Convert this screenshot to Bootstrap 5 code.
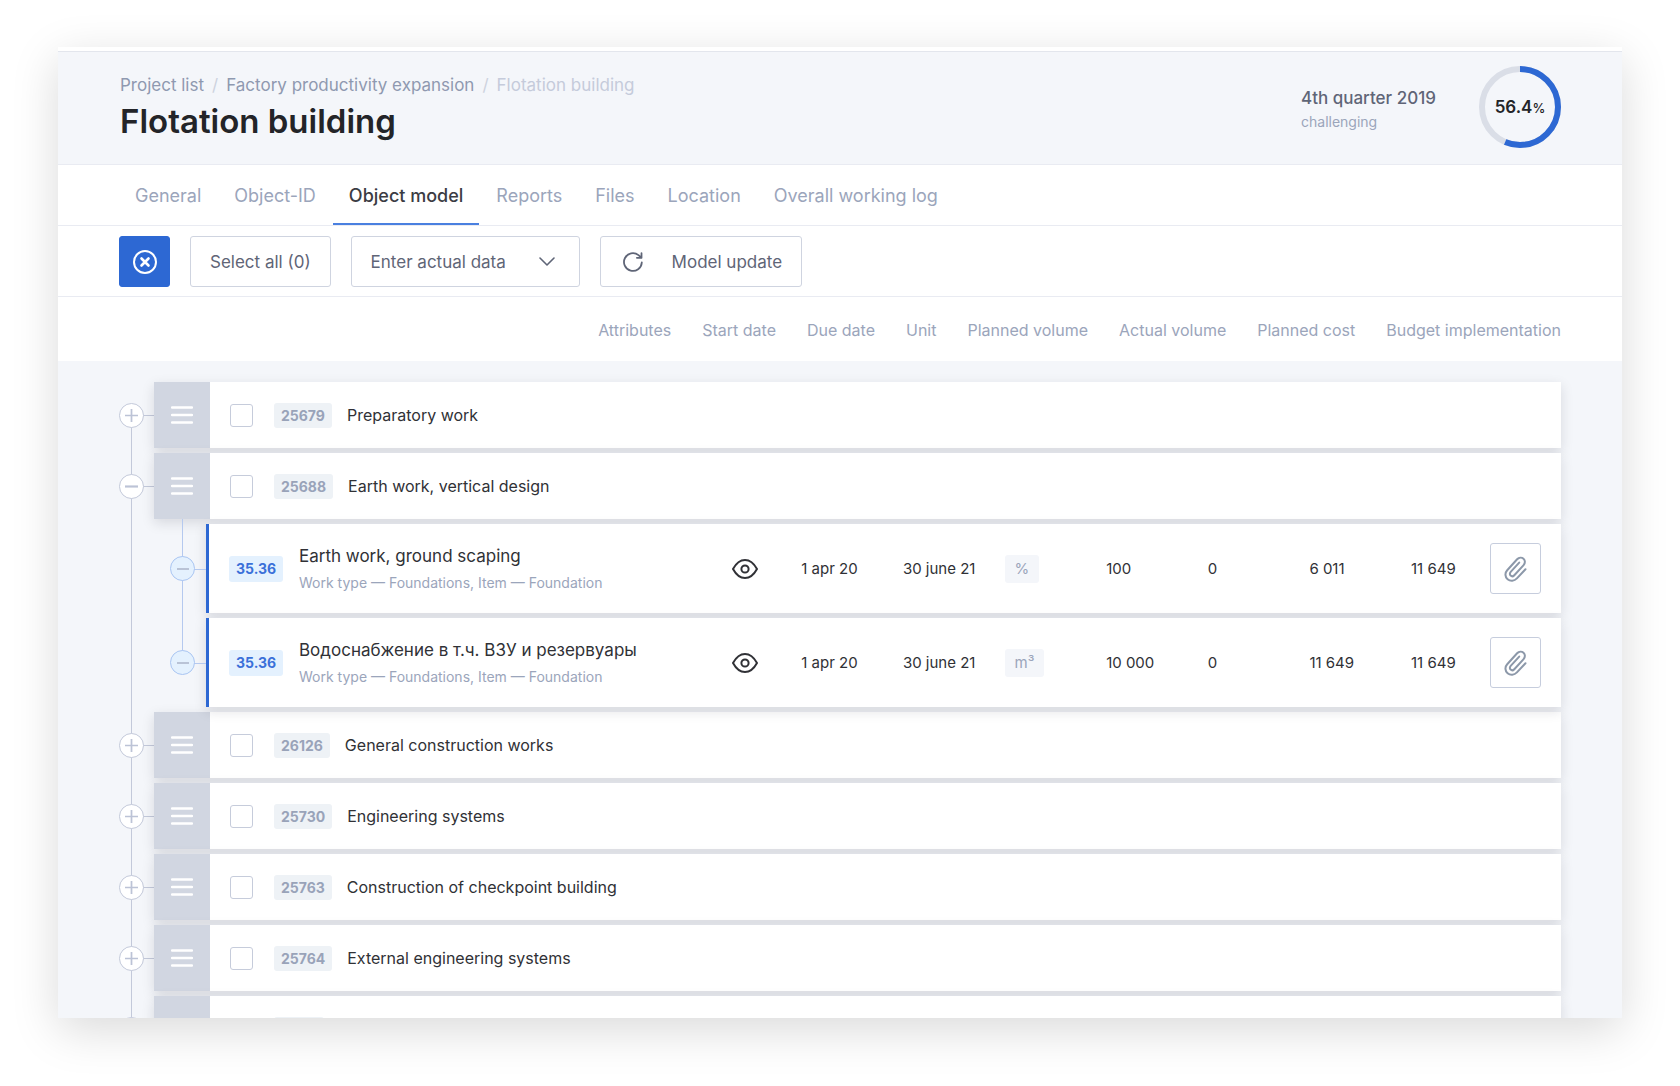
<!DOCTYPE html>
<html lang="en">
<head>
<meta charset="utf-8">
<meta name="viewport" content="width=device-width, initial-scale=1">
<title>Flotation building</title>
<link href="https://cdn.jsdelivr.net/npm/bootstrap@5.3.0/dist/css/bootstrap.min.css" rel="stylesheet">
<style>
  :root {
    --blue: #2d68d3;
    --ink: #303136;
    --slate: #5f6577;
    --muted: #9ba5bb;
    --line: #e9ebf2;
    --edge: #cfd4e0;
    --wash: #f4f6fa;
  }
  body { font-family: Inter, "Liberation Sans", sans-serif; color: var(--ink); background: #fff; font-size: 16px; line-height: 24px; }
  a { text-decoration: none; }
  .stage { height: 100vh; padding: 47px 58px 68px; }
  .app-window { background: #fff; box-shadow: 0 12px 44px rgba(0, 0, 0, .15); padding-top: 4px; }
  .gutter { padding-left: 61px; padding-right: 61px; }

  .page-head { background: var(--wash); border-top: 1px solid #e3e6ed; border-bottom: 1px solid var(--line); padding-top: 21px; padding-bottom: 23px; }
  .headings { padding-left: 1px; }
  .breadcrumb { --bs-breadcrumb-divider-color: #cdd2de; --bs-breadcrumb-item-padding-x: 8px; font-size: 17px; }
  .breadcrumb a { color: #8f99b0; }
  .breadcrumb .active { color: #c5cbdb; }
  .page-title { font-size: 33px; line-height: 40px; font-weight: 600; color: #232428; }
  .due { width: 137px; padding-top: 6px; margin-right: 41px; }
  .due-when { font-size: 17px; font-weight: 500; color: var(--slate); }
  .due-state { font-size: 14px; color: var(--muted); }
  .ring { width: 82px; height: 82px; margin: -20px 0; }
  .ring svg { transform: rotate(-90deg); }
  .ring-value { font-size: 17px; font-weight: 600; color: #232428; }
  .ring-value span { font-size: 13px; font-weight: 500; }

  .tabs { border-bottom: 1px solid var(--line); gap: 1px; }
  .tabs .nav-link { color: var(--muted); font-size: 18px; line-height: 24px; padding: 19px 16px 15px; border-bottom: 2px solid transparent; }
  .tabs .nav-link.active { color: #3b3c43; border-color: #4a80e0; font-weight: 500; }

  .toolbar { border-bottom: 1px solid var(--line); padding-top: 10px; padding-bottom: 9px; gap: 20px; }
  .tool { height: 51px; border: 1px solid var(--edge); border-radius: 3px; font-size: 17px; line-height: 24px; color: var(--slate); padding: 0 19px; background-color: #fff; }
  .tool-square { width: 51px; padding: 0; background: var(--blue); border-color: var(--blue); color: #fff; }
  .tool-select { width: 229px; background-image: url("data:image/svg+xml,%3Csvg xmlns='http://www.w3.org/2000/svg' viewBox='0 0 16 16'%3E%3Cpath fill='none' stroke='%235f6577' stroke-width='1.6' stroke-linecap='round' stroke-linejoin='round' d='M1 4l7 7 7-7'/%3E%3C/svg%3E"); background-size: 16px 16px; background-position: right 24px center; }
  .tool-update { gap: 29px; padding-left: 22px; }

  .col-heads { font-size: 16px; color: var(--muted); gap: 31px; padding-top: 21px; padding-bottom: 19px; }

  .tree-area { background: var(--wash); padding-top: 21px; }
  .tree { gap: 5px; position: relative; }
  .tree::before { content: ""; position: absolute; left: 12px; top: 34px; height: 100vh; width: 1px; background: #c3c9da; }
  .knot { width: 35px; position: relative; }
  .knot::before { content: ""; position: absolute; left: 12px; right: 0; top: 50%; height: 1px; background: #c3c9da; }
  .knob { width: 25px; height: 25px; position: relative; background: #fff; border: 1px solid #c3c9da; border-radius: 50%; color: #bcc3d6; }
  .bar-card { background: #fff; box-shadow: 0 4px 12px rgba(20, 20, 35, .13); height: 66px; position: relative; }
  .grip { width: 56px; background: #d1d6e1; border-radius: 0; margin-right: 20px; }
  .row-check { width: 23px; height: 23px; margin: 0 21px 0 0; border: 1px solid #c6ccdb; }
  .tree .row-check { border-radius: 3px; }
  .code-tag { background: #eef2f6; color: #99a3b9; font-size: 14px; font-weight: 700; line-height: 25px; padding: 0 7px; border-radius: 3px; margin-right: 15px; }
  .row-name { color: var(--ink); font-size: 16px; }

  .branch { padding-left: 35px; position: relative; z-index: 1; }
  .rail { width: 52px; gap: 5px; position: relative; }
  .rail::before { content: ""; position: absolute; left: 28px; top: -5px; height: 143px; width: 1px; background: #b5c9ef; }
  .rail-stop { height: 89px; padding-left: 16px; position: relative; }
  .rail-stop::before { content: ""; position: absolute; left: 28px; right: 0; top: 50%; height: 1px; background: #b5c9ef; }
  .rail-stop .knob { background: #e4f1fe; border-color: #a9c5f2; color: #b9c3d6; }
  .work-table { table-layout: fixed; border-collapse: separate; border-spacing: 0 5px; margin: -5px 0; flex: 1 1 0; width: 1px; font-size: 15px; }
  .work-table tbody tr { box-shadow: 0 4px 12px rgba(20, 20, 35, .13); }
  .work-table td { background: #fff; height: 89px; padding: 0; vertical-align: middle; white-space: nowrap; }
  .work-table td:first-child { border-left: 3px solid var(--blue); padding-left: 20px; }
  .w-code { width: 93px; }
  .w-eye { width: 69px; }
  .w-data { width: 7.5%; }
  .w-budget { width: 79px; }
  .w-clip { width: 71px; }
  .score-tag { background: #e4f1fe; color: #3a70d9; font-size: 14px; font-weight: 700; line-height: 26px; padding: 0 7px; border-radius: 3px; display: inline-block; }
  .work-name { font-size: 17px; line-height: 24px; color: var(--ink); padding-top: 2px; }
  .work-note { font-size: 14px; line-height: 24px; color: var(--muted); padding-top: 3px; }
  .unit-tag { background: var(--wash); color: var(--muted); line-height: 28px; padding: 0 10px; border-radius: 3px; display: inline-block; }
  .clip-btn { width: 51px; height: 51px; border: 1px solid #c6cddd; border-radius: 3px; padding: 0; color: #8c98a9; background: #fff; }
</style>
<script src="https://cdn.jsdelivr.net/npm/bootstrap@5.3.0/dist/js/bootstrap.bundle.min.js"></script>
</head>
<body>
<svg class="d-none" aria-hidden="true">
  <symbol id="plus" viewBox="0 0 12 12"><path d="M0 6h12M6 0v12" stroke="currentColor" stroke-width="1.6"/></symbol>
  <symbol id="minus" viewBox="0 0 12 12"><path d="M0 6h12" stroke="currentColor" stroke-width="2"/></symbol>
  <symbol id="lines" viewBox="0 0 22 18"><path d="M1 1.5h20M1 9h20M1 16.5h20" stroke="#fff" stroke-width="2.4" stroke-linecap="round"/></symbol>
  <symbol id="eye" viewBox="0 0 26 20"><g fill="none" stroke="#303136" stroke-width="2" stroke-linejoin="round"><path d="M1 10C4 4.500 8 1 13 1s9 3.500 12 9c-3 5.500-7 9-12 9S4 15.500 1 10z"/><circle cx="13" cy="10" r="3.600"/></g></symbol>
  <symbol id="clip" viewBox="0.5 0 24 26"><path d="M22 13.200l-8.600 9.200c-2.600 2.800-6.600 3.100-9.300.8s-2.900-6.300-.4-9L13.600 3.300c1.900-2 4.600-2.200 6.400-.6s1.900 4.400.1 6.400l-9.300 10.100c-1.100 1.200-2.700 1.300-3.700.4s-1-2.500.1-3.700l8.500-9.300" fill="none" stroke="currentColor" stroke-width="2" stroke-linecap="round"/></symbol>
</svg>

<div class="stage">
<main class="app-window h-100 overflow-hidden d-flex flex-column">

  <header class="page-head gutter d-flex align-items-center flex-shrink-0">
    <div class="headings me-auto">
      <nav aria-label="Breadcrumb">
        <ol class="breadcrumb mb-1">
          <li class="breadcrumb-item"><a href="#">Project list</a></li>
          <li class="breadcrumb-item"><a href="#">Factory productivity expansion</a></li>
          <li class="breadcrumb-item active" aria-current="page">Flotation building</li>
        </ol>
      </nav>
      <h1 class="page-title mb-0">Flotation building</h1>
    </div>
    <div class="due text-nowrap">
      <div class="due-when">4th quarter 2019</div>
      <div class="due-state">challenging</div>
    </div>
    <div class="ring position-relative d-flex align-items-center justify-content-center">
      <svg class="position-absolute top-0 start-0" width="82" height="82" viewBox="0 0 82 82" fill="none" stroke-width="6" aria-hidden="true">
        <circle cx="41" cy="41" r="38" stroke="#dadee7"/>
        <circle cx="41" cy="41" r="38" stroke="#2d68d3" pathLength="100" stroke-dasharray="56.4 100"/>
      </svg>
      <div class="ring-value position-relative">56.4<span>%</span></div>
    </div>
  </header>

  <nav class="tabs nav gutter flex-shrink-0" aria-label="Sections">
    <a class="nav-link" href="#">General</a>
    <a class="nav-link" href="#">Object-ID</a>
    <a class="nav-link active" aria-current="page" href="#">Object model</a>
    <a class="nav-link" href="#">Reports</a>
    <a class="nav-link" href="#">Files</a>
    <a class="nav-link" href="#">Location</a>
    <a class="nav-link" href="#">Overall working log</a>
  </nav>

  <div class="toolbar gutter d-flex flex-shrink-0">
    <button type="button" class="btn tool tool-square d-flex align-items-center justify-content-center" aria-label="Clear selection">
      <svg width="24" height="24" viewBox="0 0 24 24" fill="none" stroke="currentColor" stroke-linecap="round"><circle cx="12" cy="12" r="11" stroke-width="2"/><path d="M8.500 8.500l7 7M15.500 8.500l-7 7" stroke-width="2.600"/></svg>
    </button>
    <button type="button" class="btn tool">Select all (0)</button>
    <select class="form-select tool tool-select" aria-label="Data entry"><option>Enter actual data</option></select>
    <button type="button" class="btn tool tool-update d-flex align-items-center">
      <svg width="20" height="20" viewBox="0 0 20 20" fill="none" stroke="currentColor" stroke-width="1.800" stroke-linecap="round" stroke-linejoin="round" aria-hidden="true"><path d="M18.800 10.500A8.900 8.900 0 1 1 15.500 3.100L18.500 5.800M18.500 1.200v4.600h-4.600"/></svg>
      Model update
    </button>
  </div>

  <div class="col-heads gutter d-flex justify-content-end text-nowrap flex-shrink-0">
    <span>Attributes</span><span>Start date</span><span>Due date</span><span>Unit</span><span>Planned volume</span><span>Actual volume</span><span>Planned cost</span><span>Budget implementation</span>
  </div>

  <section class="tree-area gutter flex-grow-1 overflow-hidden">
    <div class="tree d-flex flex-column">

      <div class="d-flex">
        <div class="knot d-flex align-items-center"><button type="button" class="knob p-0 d-flex align-items-center justify-content-center" aria-label="Expand"><svg width="13" height="13"><use href="#plus"/></svg></button></div>
        <div class="bar-card d-flex align-items-center flex-grow-1">
          <button type="button" class="btn grip h-100 p-0" aria-label="Move"><svg class="d-block mx-auto" width="22" height="18"><use href="#lines"/></svg></button>
          <input class="form-check-input row-check" type="checkbox" id="r1"><span class="code-tag">25679</span><label class="row-name" for="r1">Preparatory work</label>
        </div>
      </div>

      <div class="d-flex">
        <div class="knot d-flex align-items-center"><button type="button" class="knob p-0 d-flex align-items-center justify-content-center" aria-label="Collapse"><svg width="13" height="13"><use href="#minus"/></svg></button></div>
        <div class="bar-card d-flex align-items-center flex-grow-1">
          <button type="button" class="btn grip h-100 p-0" aria-label="Move"><svg class="d-block mx-auto" width="22" height="18"><use href="#lines"/></svg></button>
          <input class="form-check-input row-check" type="checkbox" id="r2"><span class="code-tag">25688</span><label class="row-name" for="r2">Earth work, vertical design</label>
        </div>
      </div>

      <div class="branch d-flex">
        <div class="rail d-flex flex-column">
          <div class="rail-stop d-flex align-items-center"><button type="button" class="knob p-0 d-flex align-items-center justify-content-center" aria-label="Collapse"><svg width="12" height="12"><use href="#minus"/></svg></button></div>
          <div class="rail-stop d-flex align-items-center"><button type="button" class="knob p-0 d-flex align-items-center justify-content-center" aria-label="Collapse"><svg width="12" height="12"><use href="#minus"/></svg></button></div>
        </div>
        <table class="work-table">
          <colgroup><col class="w-code"><col><col class="w-eye"><col class="w-data"><col class="w-data"><col class="w-data"><col class="w-data"><col class="w-data"><col class="w-data"><col class="w-budget"><col class="w-clip"></colgroup>
          <tbody>
            <tr>
              <td><span class="score-tag">35.36</span></td>
              <td><div class="work-name">Earth work, ground scaping</div><div class="work-note">Work type — Foundations, Item — Foundation</div></td>
              <td><svg width="26" height="20" role="img" aria-label="Visible"><use href="#eye"/></svg></td>
              <td>1 apr 20</td><td>30 june 21</td><td><span class="unit-tag">%</span></td><td>100</td><td>0</td><td>6 011</td><td>11 649</td>
              <td><button type="button" class="btn clip-btn" aria-label="Attach file"><svg width="24" height="26"><use href="#clip"/></svg></button></td>
            </tr>
            <tr>
              <td><span class="score-tag">35.36</span></td>
              <td><div class="work-name" lang="ru">Водоснабжение в т.ч. ВЗУ и резервуары</div><div class="work-note">Work type — Foundations, Item — Foundation</div></td>
              <td><svg width="26" height="20" role="img" aria-label="Visible"><use href="#eye"/></svg></td>
              <td>1 apr 20</td><td>30 june 21</td><td><span class="unit-tag">m³</span></td><td>10 000</td><td>0</td><td>11 649</td><td>11 649</td>
              <td><button type="button" class="btn clip-btn" aria-label="Attach file"><svg width="24" height="26"><use href="#clip"/></svg></button></td>
            </tr>
          </tbody>
        </table>
      </div>

      <div class="d-flex">
        <div class="knot d-flex align-items-center"><button type="button" class="knob p-0 d-flex align-items-center justify-content-center" aria-label="Expand"><svg width="13" height="13"><use href="#plus"/></svg></button></div>
        <div class="bar-card d-flex align-items-center flex-grow-1">
          <button type="button" class="btn grip h-100 p-0" aria-label="Move"><svg class="d-block mx-auto" width="22" height="18"><use href="#lines"/></svg></button>
          <input class="form-check-input row-check" type="checkbox" id="r3"><span class="code-tag">26126</span><label class="row-name" for="r3">General construction works</label>
        </div>
      </div>

      <div class="d-flex">
        <div class="knot d-flex align-items-center"><button type="button" class="knob p-0 d-flex align-items-center justify-content-center" aria-label="Expand"><svg width="13" height="13"><use href="#plus"/></svg></button></div>
        <div class="bar-card d-flex align-items-center flex-grow-1">
          <button type="button" class="btn grip h-100 p-0" aria-label="Move"><svg class="d-block mx-auto" width="22" height="18"><use href="#lines"/></svg></button>
          <input class="form-check-input row-check" type="checkbox" id="r4"><span class="code-tag">25730</span><label class="row-name" for="r4">Engineering systems</label>
        </div>
      </div>

      <div class="d-flex">
        <div class="knot d-flex align-items-center"><button type="button" class="knob p-0 d-flex align-items-center justify-content-center" aria-label="Expand"><svg width="13" height="13"><use href="#plus"/></svg></button></div>
        <div class="bar-card d-flex align-items-center flex-grow-1">
          <button type="button" class="btn grip h-100 p-0" aria-label="Move"><svg class="d-block mx-auto" width="22" height="18"><use href="#lines"/></svg></button>
          <input class="form-check-input row-check" type="checkbox" id="r5"><span class="code-tag">25763</span><label class="row-name" for="r5">Construction of checkpoint building</label>
        </div>
      </div>

      <div class="d-flex">
        <div class="knot d-flex align-items-center"><button type="button" class="knob p-0 d-flex align-items-center justify-content-center" aria-label="Expand"><svg width="13" height="13"><use href="#plus"/></svg></button></div>
        <div class="bar-card d-flex align-items-center flex-grow-1">
          <button type="button" class="btn grip h-100 p-0" aria-label="Move"><svg class="d-block mx-auto" width="22" height="18"><use href="#lines"/></svg></button>
          <input class="form-check-input row-check" type="checkbox" id="r6"><span class="code-tag">25764</span><label class="row-name" for="r6">External engineering systems</label>
        </div>
      </div>

      <div class="d-flex">
        <div class="knot d-flex align-items-center"><button type="button" class="knob p-0 d-flex align-items-center justify-content-center" aria-label="Expand"><svg width="13" height="13"><use href="#plus"/></svg></button></div>
        <div class="bar-card d-flex align-items-center flex-grow-1">
          <button type="button" class="btn grip h-100 p-0" aria-label="Move"></button>
          <input class="form-check-input row-check" type="checkbox" aria-label="Select row"><span class="code-tag">&nbsp;&nbsp;&nbsp;&nbsp;&nbsp;&nbsp;&nbsp;&nbsp;&nbsp;&nbsp;&nbsp;</span>
        </div>
      </div>

    </div>
  </section>
</main>
</div>
</body>
</html>
